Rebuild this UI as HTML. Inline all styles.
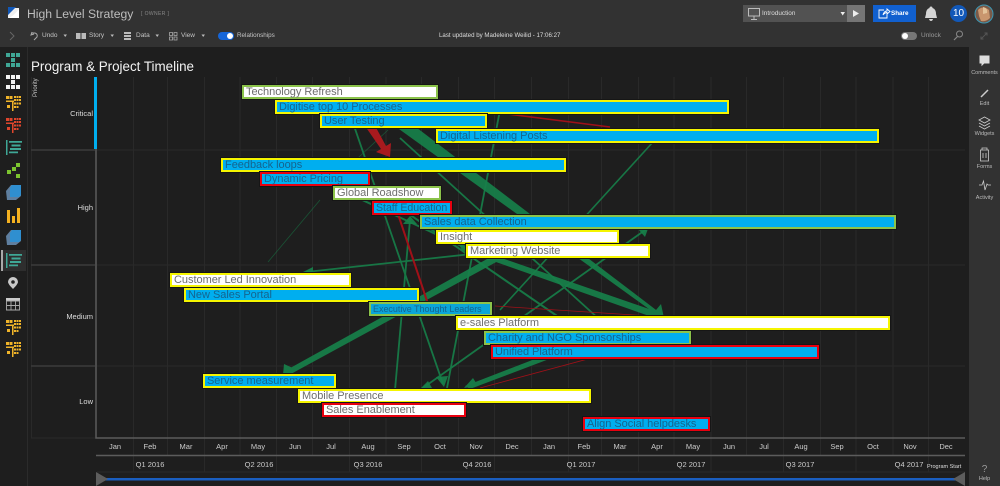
<!DOCTYPE html>
<html><head><meta charset="utf-8"><style>
html,body{margin:0;padding:0;background:#1e1e1e}
#p{position:relative;width:1000px;height:486px;overflow:hidden;background:#1e1e1e;font-family:"Liberation Sans",sans-serif;color:#ddd}
#p div,#p span.a{position:absolute;box-sizing:border-box}
.t{white-space:nowrap;font-size:6.500px;line-height:10px;color:#c4c4c4}
.b{white-space:nowrap;border:2px solid;font-size:11px;line-height:11px;padding-left:2px;letter-spacing:-.03px;height:14px;box-shadow:0 0 0 1px #161616}
.w{background:#fff;color:#6e6e6e}.c{background:#00aeef;color:#15648e}
.g{border-color:#8bc34a}.y{border-color:#f5f500}.r{border-color:#e8000f}
.m{font-size:7.500px;line-height:10px;color:#ccc;text-align:center;top:442px;width:36px;white-space:nowrap}
.q{font-size:7.500px;line-height:10px;color:#ccc;text-align:center;top:460px;width:60px;white-space:nowrap}
.rl{font-size:5.500px;line-height:7px;color:#bbb;text-align:center;left:969px;width:31px;white-space:nowrap}
svg{position:absolute;overflow:visible}
</style></head><body><div id="p">
<!-- header -->
<div style="left:0;top:0;width:1000px;height:47px;background:#323232"></div>
<div style="left:969px;top:47px;width:31px;height:439px;background:#323232"></div>
<div style="left:27px;top:47px;width:1px;height:439px;background:#2b2b2b"></div>
<svg style="left:0;top:0" width="200" height="47">
<path d="M8 18 8 8 19 8 19 18Z" fill="#eee"/><path d="M8 7H16L8 15Z" fill="#1258b8"/><path d="M8 18Q13 17 19 9V18Z" fill="#fff"/>
<path d="M10 32 14 36 10 40" fill="none" stroke="#666" stroke-width="1"/>
<path d="M32 32 31 35 34 34M32 33H35Q38 34 37 37L34 40" fill="none" stroke="#aaa" stroke-width="1"/>
<path d="M76 33H80.500V39H76ZM81.500 33H86V39H81.500Z" fill="#bbb"/>
<path d="M124 32H131V34H124ZM124 35H131V37H124ZM124 38H131V40H124Z" fill="#bbb"/>
<path d="M169.500 32.500H172.500V35.500H169.500ZM174 32.500H177V35.500H174ZM169.500 37H172.500V40H169.500ZM174 37H177V40H174Z" fill="none" stroke="#aaa" stroke-width=".8"/>
<path d="M63.500 34.500H67L65.200 37ZM110.500 34.500H114L112.200 37ZM155.500 34.500H159L157.200 37ZM201.500 34.500H205L203.200 37Z" fill="#bbb"/>
</svg>
<div class="t" style="left:27px;top:5px;font-size:12.200px;line-height:18px;color:#bdbdbd">High Level Strategy</div>
<div class="t" style="left:141px;top:9px;font-size:5px;color:#888;letter-spacing:.4px">[ OWNER ]</div>
<div class="t" style="left:42px;top:31px">Undo</div>
<div class="t" style="left:89px;top:31px">Story</div>
<div class="t" style="left:136px;top:31px">Data</div>
<div class="t" style="left:181px;top:31px">View</div>
<div style="left:218px;top:32px;width:16px;height:8px;border-radius:4px;background:#1565d8"></div>
<div style="left:227px;top:33px;width:6px;height:6px;border-radius:3px;background:#fff"></div>
<div class="t" style="left:237px;top:31px;font-size:6.300px">Relationships</div>
<div class="t" style="left:439px;top:31px;font-size:6.150px;color:#ddd">Last updated by Madeleine Weilid - 17:06:27</div>
<div style="left:901px;top:32px;width:16px;height:8px;border-radius:4px;background:#777"></div>
<div style="left:902px;top:33px;width:6px;height:6px;border-radius:3px;background:#fff"></div>
<div class="t" style="left:921px;top:31px;color:#999">Unlock</div>
<svg style="left:950px;top:28px" width="45" height="16"><circle cx="9.500" cy="6" r="3" fill="none" stroke="#888"/><path d="M7.500 8.500 4 12" stroke="#888" stroke-width="1.200"/><path d="M31 11 37 5M34.500 5H37V7.500M31 8.500V11H33.500" fill="none" stroke="#555"/></svg>
<div style="left:743px;top:5px;width:122px;height:17px;background:#525252"></div>
<div style="left:847px;top:5px;width:18px;height:17px;background:#757575"></div>
<svg style="left:743px;top:5px" width="125" height="18"><path d="M5.500 3.500H16.500V11H5.500ZM11 11V14M8 14.500H14" fill="none" stroke="#bbb"/><path d="M97.500 7H102L99.700 10.500ZM110 5 116 8.500 110 12Z" fill="#eee"/></svg>
<div class="t" style="left:762px;top:9px;color:#ddd;font-size:6.400px">Introduction</div>
<div style="left:873px;top:5px;width:43px;height:17px;background:#1160cf"></div>
<svg style="left:878px;top:8px" width="14" height="12"><path d="M6 2H1V10H9V6M5 7Q6 3 9 3V1L12 3.500 9 6V4.500Q7 4.500 5 7Z" fill="none" stroke="#fff" stroke-width=".9"/></svg>
<div class="t" style="left:891px;top:9px;color:#fff;font-weight:bold;font-size:6.300px">Share</div>
<svg style="left:924px;top:6px" width="14" height="15"><path d="M7 0.500Q8.500 .5 8.500 2 12 3 12 8L13 12H1L2 8Q2 3 5.500 2 5.500 .5 7 .5Z" fill="#d5d5d5"/><path d="M5 13H9Q8.500 15 7 15T5 13Z" fill="#d5d5d5"/></svg>
<div style="left:950px;top:5px;width:17px;height:17px;border-radius:50%;background:#1258b8;color:#fff;font-size:10px;line-height:17px;text-align:center">10</div>
<svg style="left:974px;top:4px" width="20" height="20"><circle cx="10" cy="10" r="9" fill="#7a5a48" stroke="#3a97b5" stroke-width="1"/><path d="M4 6Q9 1 15 6L16 14Q12 18 7 17L5 12Z" fill="#c9966e"/><path d="M9 3Q14 4 13 9L9 10Z" fill="#e3c39a"/></svg>

<!-- left icons -->
<svg style="left:0;top:47px" width="28" height="320">
<defs>
<g id="gridi"><path d="M0 0h4v4h-4zM5 0h4v4h-4zM10 0h4v4h-4zM5 5h4v4h-4zM0 10h4v4h-4zM5 10h4v4h-4zM10 10h4v4h-4z"/></g>
<g id="tree"><path d="M0 0h3v3h-3zM3.500 0h3v3h-3zM8 0h2v2h-2zM10.500 0h2v2h-2zM13 0h2v2h-2zM8 3h2v2h-2zM10.500 3h2v2h-2zM13 3h2v2h-2zM0 4.500H8v1.500H0zM6 6h1.500v9H6zM8 6.500h2v2h-2zM10.500 6.500h2v2h-2zM13 6.500h2v2h-2zM8 10h2v2h-2zM10.500 10h2v2h-2zM1 9h3v3h-3z"/></g>
<g id="tl"><path d="M0 0h1.500v15H0zM3 1h13v1.800H3zM5.500 4.500h9v2H5.500zM4 8h11v2H4zM3 11.500h9v1.800H3z"/></g>
<g id="cube"><path d="M0 6 5 0H15V11L10 15H1Z" fill="#5f7f9f"/><path d="M4 3 6 0H15V10L13 12H4Z" fill="#2f8fd0"/></g>
</defs>
<use href="#gridi" x="6" y="6" fill="#3fa796"/>
<use href="#gridi" x="6" y="28" fill="#f2f2f2"/>
<use href="#tree" x="6" y="49" fill="#f0b429"/>
<use href="#tree" x="6" y="71" fill="#e0452c"/>
<use href="#tl" x="6" y="93" fill="#3fa796"/>
<path d="M7 123h4v4H7zM16 116h4v4h-4zM12 120h4v4h-4zM16 127h4v4h-4z" fill="#7cc42f"/>
<use href="#cube" x="6" y="138"/>
<path d="M7 163h3v13H7zM12 169h3v7h-3zM17 161h3v15h-3z" fill="#f4b120"/>
<use href="#cube" x="6" y="183"/>
<rect x="3" y="203" width="23" height="21" fill="#2e2e2e"/><rect x="1" y="203" width="2" height="21" fill="#aaa"/>
<use href="#tl" x="6" y="206" fill="#3fa796"/>
<path d="M13 230a5 5 0 0 1 5 5q0 2-5 7q-5-5-5-7a5 5 0 0 1 5-5z" fill="#c9c9c9"/><circle cx="13" cy="235" r="1.800" fill="#222"/>
<path d="M6 251h14v2.500H6z" fill="#ccc"/><path d="M6.500 254h13v9h-13zM11 254v9M15.500 254v9M6.500 258.500h13" fill="none" stroke="#aaa" stroke-width=".9"/>
<use href="#tree" x="6" y="273" fill="#f0b429"/>
<use href="#tree" x="6" y="295" fill="#f0b429"/>
</svg>

<!-- chart frame -->
<div class="t" style="left:31px;top:58px;font-size:13.400px;line-height:18px;color:#f2f2f2">Program &amp; Project Timeline</div>
<svg style="left:0;top:0" width="1000" height="486">
<g stroke="#292929" stroke-width="1" fill="none">
<path d="M31.500 77V438H96"/>
<path d="M133.500 77V472M167.500 77V455M204.500 77V472M240 77V455M276.500 77V472M312.500 77V455M349.500 77V472M386 77V455M421.500 77V472M458.500 77V455M494.500 77V472M531.500 77V455M568.500 77V472M601.500 77V455M638.500 77V472M674 77V455M711 77V472M746.500 77V455M783.500 77V472M820.500 77V455M856 77V472M893 77V455M928.500 77V472"/>
<path d="M97 150H965M97 265H965M97 366H965M97 472H965"/>
</g>
<g stroke="#3b3b3b" stroke-width="1.500"><path d="M31 150H95M31 265H95M31 366H95"/></g>
<path d="M96 77V438H965M96 455.500H965" stroke="#5c5c5c" stroke-width="1.500" fill="none"/>
<rect x="94" y="77" width="3" height="72" fill="#00aeef"/>
<rect x="96" y="478" width="862" height="2.500" fill="#1a5ec0"/>
<path d="M96 472 108 479 96 486ZM965 472V486L953 479Z" fill="#5d5d5d"/>
<!-- relationships -->
<g fill="none" stroke="#17804a" opacity=".9">
<path d="M352 120 443 384" stroke-width="1.800"/>
<path d="M395 390 410 220" stroke-width="1.800"/>
<path d="M500 110 447 388" stroke-width="1.800"/>
<path d="M648 228 420 390" stroke-width="1.800"/>
<path d="M653 142 500 310" stroke-width="1.600"/>
<path d="M490 252 306 272" stroke-width="1.800"/>
<path d="M330 185 470 250" stroke-width="2"/>
<path d="M345 170 560 318" stroke-width="2"/>
<path d="M400 138 600 320" stroke-width="1.800"/>
<path d="M320 200 268 262" stroke-width=".8" opacity=".6"/>
<path d="M388 130 345 170" stroke-width=".8" opacity=".6"/>
</g>
<g fill="#17804a" opacity=".92">
<path d="M392 124 404 118 664 316 660 317Z"/>
<path d="M458 243 462 250 652 317 655 311Z"/>
<path d="M283 372 496 254 500 260 289 375Z"/>
<path d="M465 386 600 334 602 339 470 389Z"/>
<path d="M283 375 284 364 295 369Z"/>
<path d="M664 318 651 316 661 304Z"/>
<path d="M649 226 638 229 645 237Z"/>
<path d="M410 216 403 224 417 224Z"/>
<path d="M444 387 436 377 448 376Z"/>
<path d="M303 272 313 267 313 276Z"/>
<path d="M464 388 473 378 478 386Z"/>
<path d="M420 389 428 381 432 388Z"/>
</g>
<g fill="none" stroke="#a01018">
<path d="M395 205 428 304" stroke-width="2"/>
<path d="M495 306 680 318" stroke-width=".8"/>
<path d="M480 388 640 345" stroke-width=".8"/>
<path d="M500 113 610 127" stroke-width="1.600"/>
</g>
<path d="M365 126 373 122 386 146 391 143 390 157 376 152 381 149Z" fill="#a81a1e"/>
</svg>
<div class="t" style="left:33px;top:97px;font-size:6px;transform:rotate(-90deg);transform-origin:left top;color:#ccc;line-height:7px">Priority</div>
<div class="t" style="left:60px;top:109px;width:33px;text-align:right;font-size:7.500px;color:#ddd">Critical</div>
<div class="t" style="left:60px;top:203px;width:33px;text-align:right;font-size:7.500px;color:#ddd">High</div>
<div class="t" style="left:60px;top:312px;width:33px;text-align:right;font-size:7.500px;color:#ddd">Medium</div>
<div class="t" style="left:60px;top:397px;width:33px;text-align:right;font-size:7.500px;color:#ddd">Low</div>

<!-- bars -->
<div class="b w g" style="left:242px;top:85px;width:196px">Technology Refresh</div>
<div class="b c y" style="left:275px;top:100px;width:454px">Digitise top 10 Processes</div>
<div class="b c y" style="left:320px;top:114px;width:167px">User Testing</div>
<div class="b c y" style="left:436px;top:129px;width:443px">Digital Listening Posts</div>
<div class="b c y" style="left:221px;top:158px;width:345px">Feedback loops</div>
<div class="b c r" style="left:260px;top:172px;width:110px">Dynamic Pricing</div>
<div class="b w g" style="left:333px;top:186px;width:108px">Global Roadshow</div>
<div class="b c r" style="left:372px;top:201px;width:80px;font-size:10.600px">Staff Education</div>
<div class="b c g" style="left:420px;top:215px;width:476px">Sales data Collection</div>
<div class="b w y" style="left:436px;top:230px;width:183px">Insight</div>
<div class="b w y" style="left:466px;top:244px;width:184px">Marketing Website</div>
<div class="b w y" style="left:170px;top:273px;width:181px">Customer Led Innovation</div>
<div class="b c y" style="left:184px;top:288px;width:235px">New Sales Portal</div>
<div class="b c g" style="left:369px;top:302px;width:123px;font-size:9px;background:#0aa5d8">Executive Thought Leaders</div>
<div class="b w y" style="left:456px;top:316px;width:434px">e-sales Platform</div>
<div class="b c g" style="left:484px;top:331px;width:207px">Charity and NGO Sponsorships</div>
<div class="b c r" style="left:491px;top:345px;width:328px">Unified Platform</div>
<div class="b c y" style="left:203px;top:374px;width:133px">Service measurement</div>
<div class="b w y" style="left:298px;top:389px;width:293px">Mobile Presence</div>
<div class="b w r" style="left:322px;top:403px;width:144px">Sales Enablement</div>
<div class="b c r" style="left:583px;top:417px;width:127px">Align Social helpdesks</div>

<!-- months -->
<div class="m" style="left:97px">Jan</div><div class="m" style="left:132px">Feb</div><div class="m" style="left:168px">Mar</div><div class="m" style="left:204px">Apr</div><div class="m" style="left:240px">May</div><div class="m" style="left:277px">Jun</div><div class="m" style="left:313px">Jul</div><div class="m" style="left:350px">Aug</div><div class="m" style="left:386px">Sep</div><div class="m" style="left:422px">Oct</div><div class="m" style="left:458px">Nov</div><div class="m" style="left:494px">Dec</div><div class="m" style="left:531px">Jan</div><div class="m" style="left:566px">Feb</div><div class="m" style="left:602px">Mar</div><div class="m" style="left:639px">Apr</div><div class="m" style="left:675px">May</div><div class="m" style="left:711px">Jun</div><div class="m" style="left:746px">Jul</div><div class="m" style="left:783px">Aug</div><div class="m" style="left:819px">Sep</div><div class="m" style="left:855px">Oct</div><div class="m" style="left:892px">Nov</div><div class="m" style="left:928px">Dec</div>
<div class="q" style="left:120px">Q1 2016</div><div class="q" style="left:229px">Q2 2016</div><div class="q" style="left:338px">Q3 2016</div><div class="q" style="left:447px">Q4 2016</div><div class="q" style="left:551px">Q1 2017</div><div class="q" style="left:661px">Q2 2017</div><div class="q" style="left:770px">Q3 2017</div><div class="q" style="left:879px">Q4 2017</div>
<div class="t" style="left:927px;top:462px;font-size:5.500px;color:#ddd">Program Start</div>

<!-- right panel -->
<svg style="left:969px;top:47px" width="31" height="150" fill="none" stroke="#ccc">
<path d="M11 9H20V16H15L13 18V16H11Z" fill="#ddd" stroke="#ddd"/>
<path d="M12 50 19 43" stroke-width="1.500"/>
<path d="M15.500 70 21 73 15.500 76 10 73ZM10 76 15.500 79 21 76M10 79 15.500 82 21 79" stroke-width=".8"/>
<path d="M11.500 103H19.500V114H11.500ZM13 103V101H18V103M14 106V111M17 106V111" stroke-width=".8"/>
<path d="M10 138H13L14.500 134 16 143 18 137 19 138H22" stroke-width=".8"/>
</svg>
<div class="rl" style="top:70px">Comments</div>
<div class="rl" style="top:101px">Edit</div>
<div class="rl" style="top:131px">Widgets</div>
<div class="rl" style="top:164px">Forms</div>
<div class="rl" style="top:195px">Activity</div>
<div class="rl" style="top:464px;font-size:10px;line-height:11px;color:#999">?</div>
<div class="rl" style="top:476px">Help</div>
</div></body></html>
